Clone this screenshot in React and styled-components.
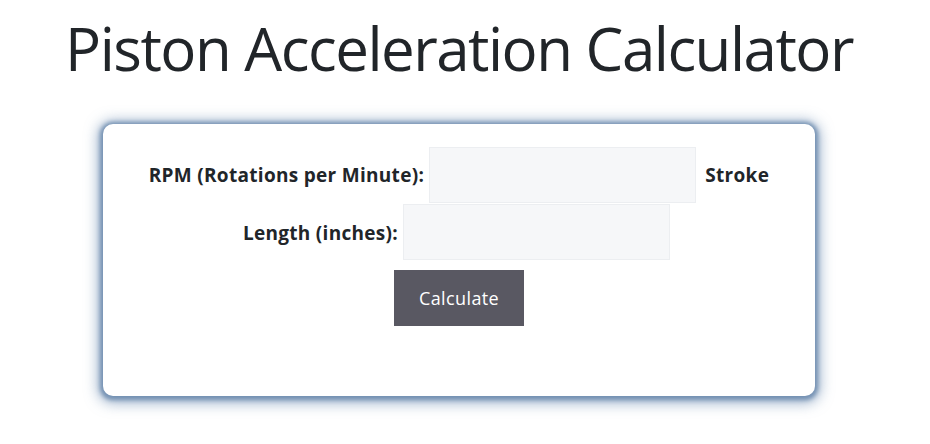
import styled, { createGlobalStyle } from "styled-components";

const GlobalStyle = createGlobalStyle`
    body {
        margin: 0;
        background: #FFFFFF;
        font-family: "Open Sans", "Noto Sans", sans-serif;
        color: #212529;
    }
`

export default function App() {
    return (
        <Page>
            <GlobalStyle />
            <Titulo>Piston Acceleration Calculator</Titulo>
            <Cartao>
                <Formulario onSubmit={(e) => e.preventDefault()}>
                    <Rotulo>RPM (Rotations per Minute):</Rotulo>
                    <Campo type="number" />
                    {" "}<Rotulo>Stroke Length (inches):</Rotulo>
                    <Campo type="number" />
                    <Botao type="submit">Calculate</Botao>
                </Formulario>
            </Cartao>
        </Page>
    )
}

const Page = styled.div`
    width: 918px;
    padding: 12px 0 40px;
`

const Titulo = styled.h1`
    margin: 0 0 40px;
    text-align: center;
    font-size: 60px;
    font-weight: 400;
    line-height: 72px;
    letter-spacing: -1.5px;
`

const Cartao = styled.div`
    width: 712px;
    margin: 0 auto;
    padding: 21px 30px 70px;
    box-sizing: border-box;
    background: #FFFFFF;
    border-radius: 10px;
    box-shadow: 0 1px 4px 3px rgba(110, 140, 175, 0.9), 0 2px 14px 5px rgba(95, 130, 170, 0.6);
`

const Formulario = styled.form`
    text-align: center;
    line-height: 56px;
`

const Rotulo = styled.label`
    font-size: 19px;
    font-weight: 700;
    letter-spacing: 0.3px;
    vertical-align: middle;
`

const Campo = styled.input`
    width: 267px;
    height: 56px;
    margin: 0 5px;
    padding: 0 12px;
    box-sizing: border-box;
    vertical-align: middle;
    background: #F6F7F9;
    border: 1px solid #ECEEF1;
    font-size: 18px;
    outline: none;
    -moz-appearance: textfield;
    &::-webkit-inner-spin-button,
    &::-webkit-outer-spin-button {
        -webkit-appearance: none;
        margin: 0;
    }
`

const Botao = styled.button`
    display: block;
    width: 130px;
    height: 56px;
    margin: 10px auto 0;
    border: none;
    background: #595862;
    color: #FFFFFF;
    font-family: inherit;
    font-size: 18px;
    letter-spacing: 0.4px;
    cursor: pointer;
`
